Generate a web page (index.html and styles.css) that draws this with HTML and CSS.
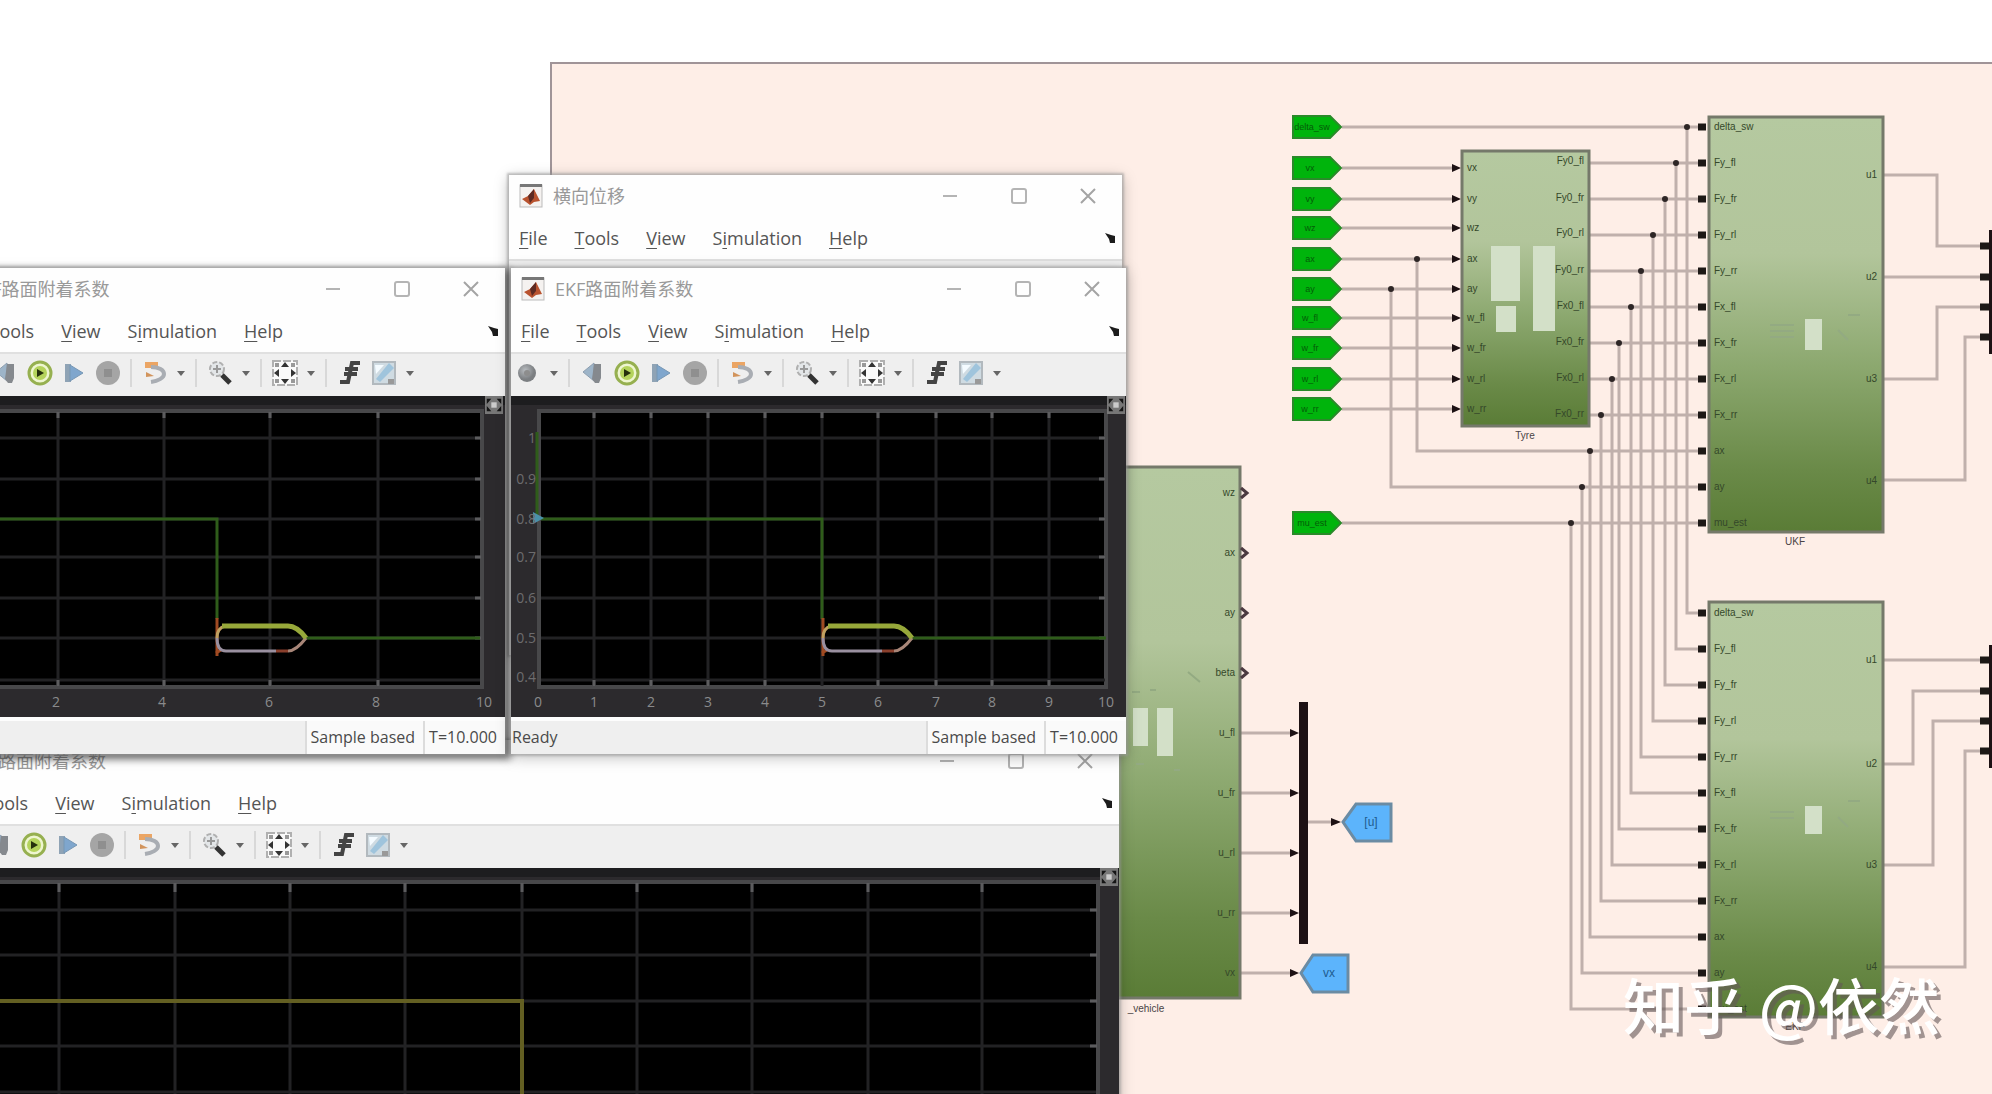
FILE: index.html
```html
<!DOCTYPE html>
<html lang="zh-CN">
<head>
<meta charset="utf-8">
<title>Simulink</title>
<link rel="stylesheet" href="styles.css">
</head>
<body>
<svg class="defs" aria-hidden="true">
  <defs>
    <linearGradient id="block" x1="0" y1="0" x2="0" y2="1">
      <stop offset="0" stop-color="#b5c9a0"/><stop offset=".33" stop-color="#b2c59b"/>
      <stop offset=".6" stop-color="#8ca86f"/><stop offset=".85" stop-color="#6a8a48"/><stop offset="1" stop-color="#5a7c36"/>
    </linearGradient>
    <radialGradient id="ball" cx=".4" cy=".35"><stop offset="0" stop-color="#b8bcc0"/><stop offset="1" stop-color="#7c7f82"/></radialGradient>
    <symbol id="i-gear" viewBox="0 0 26 26"><circle cx="12" cy="13" r="9" fill="url(#ball)"/><circle cx="12" cy="13" r="3" fill="#8d8d8d"/></symbol>
    <symbol id="i-back" viewBox="0 0 26 26"><path d="M3 12l11-9v18z" fill="#9db4c8" stroke="#8e9fb0"/><path d="M14 4h7v14l-2 5h-4l-3-4z" fill="#85898e"/></symbol>
    <symbol id="i-run" viewBox="0 0 26 26"><circle cx="13" cy="13" r="11" fill="#eef6d0" stroke="#96b050" stroke-width="3"/><circle cx="13" cy="13" r="7" fill="#b4d35c"/><path d="M10 9l7 4-7 4z" fill="#25300c"/></symbol>
    <symbol id="i-step" viewBox="0 0 26 26"><path d="M4 4h6v18H4z" fill="#8fa3b5"/><path d="M9 5l13 8-13 8z" fill="#7fa6cd" stroke="#7797b4"/></symbol>
    <symbol id="i-stop" viewBox="0 0 26 26"><circle cx="13" cy="13" r="12" fill="#a5a5a5"/><path d="M9 9h8v8H9z" fill="#8f8f8f"/></symbol>
    <symbol id="i-over" viewBox="0 0 26 26"><path d="M3 2h13v6H3z" fill="#eba564"/><path d="M9 7c8 0 13 3 13 7s-6 7-13 8" fill="none" stroke="#a9adb3" stroke-width="4"/><path d="M4 12l8 4-8 1z" fill="#d2945c"/></symbol>
    <symbol id="i-zoom" viewBox="0 0 26 26"><circle cx="10" cy="9" r="7" fill="#e3e6e8" stroke="#b0b0b0" stroke-width="2" stroke-dasharray="5 2"/><path d="M6 9h8M10 5v8" stroke="#999" stroke-width="2"/><path d="M15 15l8 8" stroke="#333" stroke-width="5"/></symbol>
    <symbol id="i-fit" viewBox="0 0 26 26"><rect x="1" y="1" width="24" height="24" fill="#fafafa" stroke="#b0b0b0" stroke-width="2" stroke-dasharray="8 2"/><path d="M13 2l4 5H9zM13 24l4-5H9zM2 13l5-4v8zM24 13l-5-4v8z" fill="#333"/><path d="M3 3h4v4H3zM19 3h4v4h-4zM3 19h4v4H3zM19 19h4v4h-4z" fill="#999"/></symbol>
    <symbol id="i-sig" viewBox="0 0 26 26"><path d="M23 3h-8l-4 19H3M7 14h13M8 9h13" fill="none" stroke="#444" stroke-width="4"/></symbol>
    <symbol id="i-edit" viewBox="0 0 26 26"><rect x="2" y="2" width="22" height="22" fill="#cfdbe2" stroke="#b2b9be" stroke-width="2"/><path d="M5 19L18 3l5 5L9 22z" fill="#9fc4dc"/><path d="M4 5h9l-8 9z" fill="#f4fbff"/><path d="M17 19h6v5h-6z" fill="#999"/></symbol>
    <symbol id="i-caret" viewBox="0 0 8 8"><path d="M0 2h8L4 7z" fill="#666"/></symbol>
    <symbol id="i-logo" viewBox="0 0 24 24"><rect x="1" y="1" width="22" height="22" fill="#f5f2f0" stroke="#bbb"/><path d="M1 0h22v3H1z" fill="#777"/><path d="M3 15l6-3 6-7 6 12-6 1-4 3z" fill="#b9532f"/><path d="M9 12l6-7v9l-4 5z" fill="#5d2a22"/></symbol>
    <symbol id="i-min" viewBox="0 0 16 16"><path d="M1 8h14" stroke="#b4b4b4" stroke-width="2"/></symbol>
    <symbol id="i-max" viewBox="0 0 16 16"><rect x="1" y="1" width="14" height="14" rx="2" fill="none" stroke="#b4b4b4" stroke-width="2"/></symbol>
    <symbol id="i-close" viewBox="0 0 16 16"><path d="M1 1l14 14M15 1L1 15" stroke="#a4a4a4" stroke-width="2"/></symbol>
    <symbol id="i-dock" viewBox="0 0 10 10"><path d="M0 0l6 2 4 1v7H5L4 6z" fill="#1c1c1c"/></symbol>
    <symbol id="i-expand" viewBox="0 0 20 20"><rect width="20" height="20" fill="#777"/><path d="M2 3h5L2 9zM18 3h-5l5 6zM2 17h5l-5-6zM18 17h-5l5-6z" fill="#151515"/><path d="M7 7h6v6H7z" fill="#ccc"/></symbol>
    <path id="tag" d="M0-11h37l11 11-11 11H0z"/>
    <g id="loop">
      <path d="M1-20v38" stroke="#a04a22" stroke-width="3"/>
      <path d="M0 15l5-3" stroke="#a04a22" stroke-width="3"/>
      <path d="M1 0q0 13 9 13h50" stroke="#9a90a0" stroke-width="3"/>
      <path d="M60 13h12" stroke="#8a3f2c" stroke-width="3"/><path d="M72 13q8 0 18-13" stroke="#a88678" stroke-width="3"/>
      <path d="M1 0q0-10 8-12" stroke="#c0a060" stroke-width="3"/>
      <path d="M6-12h66q9 0 18 12" stroke="#97a83a" stroke-width="5"/>
    </g>
  </defs>
</svg>

<main class="desktop">
<svg class="model" role="img" aria-label="Simulink model">
  <svg x="550" y="62" width="100%" height="100%"><rect class="area" x="1" y="1" width="100%" height="100%"/></svg>

  <g class="wire">
    <path d="M1342 127H1700M1342 168h110M1342 199h110M1342 228h110M1342 259h110M1342 289h110M1342 318h110M1342 348h110M1342 379h110M1342 409h110"/>
    <path d="M1590 163h110M1590 199h110M1590 235h110M1590 271h110M1590 307h110M1590 343h110M1590 379h110M1590 415h110"/>
    <path d="M1417 259V451H1700M1391 289V487H1700M1342 523H1700"/>
    <path d="M1687 127V613h12M1676 163V649h23M1665 199V685h34M1653 235V721h46M1641 271V757h58M1631 307V793h68M1619 343V829h80M1612 379V865h87M1601 415V901h98M1590 451V937h109M1582 487V973h117M1571 523V1009h128"/>
    <path d="M1883 175h54v71h48M1883 277h102M1883 379h54v-72h48M1883 480h82V337h20"/>
    <path d="M1883 660h102M1883 764h30v-73h72M1883 865h50V721h52M1883 967h82V751h20"/>
    <path d="M1240 733h50M1240 793h50M1240 853h50M1240 913h50M1240 973h50M1308 822h24"/>
  </g>

  <path class="port" d="M1698 127h8m-8 36h8m-8 36h8m-8 36h8m-8 36h8m-8 36h8m-8 36h8m-8 36h8m-8 36h8m-8 36h8m-8 36h8m-8 36h8M1698 613h8m-8 36h8m-8 36h8m-8 36h8m-8 36h8m-8 36h8m-8 36h8m-8 36h8m-8 36h8m-8 36h8m-8 36h8m-8 36h8M1980 246h9M1980 277h9M1980 307h9M1980 337h9M1980 660h9M1980 691h9M1980 721h9M1980 751h9"/>
  <path class="head" d="M1452 164l9 4-9 4zM1452 195l9 4-9 4zM1452 224l9 4-9 4zM1452 255l9 4-9 4zM1452 285l9 4-9 4zM1452 314l9 4-9 4zM1452 344l9 4-9 4zM1452 375l9 4-9 4zM1452 405l9 4-9 4zM1290 729l9 4-9 4zM1290 789l9 4-9 4zM1290 849l9 4-9 4zM1290 909l9 4-9 4zM1290 969l9 4-9 4zM1331 818l10 4-10 4z"/>
  <path class="dot" d="M1687 127h0M1676 163h0M1665 199h0M1653 235h0M1641 271h0M1631 307h0M1619 343h0M1612 379h0M1601 415h0M1590 451h0M1582 487h0M1571 523h0M1417 259h0M1391 289h0"/>
  <path class="head" d="M1299 702h9v242h-9zM1989 230h12v124h-12zM1989 645h12v123h-12z"/>

  <g class="from">
    <use href="#tag" x="1293" y="127"/><use href="#tag" x="1293" y="168"/><use href="#tag" x="1293" y="199"/><use href="#tag" x="1293" y="228"/><use href="#tag" x="1293" y="259"/><use href="#tag" x="1293" y="289"/><use href="#tag" x="1293" y="318"/><use href="#tag" x="1293" y="348"/><use href="#tag" x="1293" y="379"/><use href="#tag" x="1293" y="409"/><use href="#tag" x="1293" y="523"/>
  </g>
  <g class="tagname">
    <text x="1312" y="130">delta_sw</text><text x="1310" y="171">vx</text><text x="1310" y="202">vy</text><text x="1310" y="231">wz</text><text x="1310" y="262">ax</text><text x="1310" y="292">ay</text><text x="1310" y="321">w_fl</text><text x="1310" y="351">w_fr</text><text x="1310" y="382">w_rl</text><text x="1310" y="412">w_rr</text><text x="1312" y="526">mu_est</text>
  </g>

  <g class="block">
    <rect x="1462" y="151" width="127" height="275"/><rect x="1709" y="117" width="174" height="415"/><rect x="1709" y="602" width="174" height="415"/><rect x="1000" y="467" width="240" height="531"/>
  </g>
  <g class="art">
    <path d="M1491 246h29v55h-29zM1496 306h20v26h-20zM1533 246h22v85h-22zM1805 319h17v31h-17zM1805 806h17v28h-17zM1133 708h15v38h-15zM1157 708h16v48h-16z"/>
    <path class="faint" d="M1770 325h24M1770 331h24M1770 337h24M1838 330l10 10M1848 315h12M1770 812h24M1770 818h24M1838 817l10 10M1848 801h12M1132 692h8M1150 690h6M1188 672l12 10M1136 764h8M1174 770h6"/>
  </g>
  <g class="in">
    <text x="1467" y="171">vx</text><text x="1467" y="202">vy</text><text x="1467" y="231">wz</text><text x="1467" y="262">ax</text><text x="1467" y="292">ay</text><text x="1467" y="321">w_fl</text><text x="1467" y="351">w_fr</text><text x="1467" y="382">w_rl</text><text x="1467" y="412">w_rr</text>
    <text x="1714" y="130">delta_sw</text><text x="1714" y="166">Fy_fl</text><text x="1714" y="202">Fy_fr</text><text x="1714" y="238">Fy_rl</text><text x="1714" y="274">Fy_rr</text><text x="1714" y="310">Fx_fl</text><text x="1714" y="346">Fx_fr</text><text x="1714" y="382">Fx_rl</text><text x="1714" y="418">Fx_rr</text><text x="1714" y="454">ax</text><text x="1714" y="490">ay</text><text x="1714" y="526">mu_est</text>
    <text x="1714" y="616">delta_sw</text><text x="1714" y="652">Fy_fl</text><text x="1714" y="688">Fy_fr</text><text x="1714" y="724">Fy_rl</text><text x="1714" y="760">Fy_rr</text><text x="1714" y="796">Fx_fl</text><text x="1714" y="832">Fx_fr</text><text x="1714" y="868">Fx_rl</text><text x="1714" y="904">Fx_rr</text><text x="1714" y="940">ax</text><text x="1714" y="976">ay</text><text x="1714" y="1012">mu_est</text>
  </g>
  <g class="out">
    <text x="1584" y="164">Fy0_fl</text><text x="1584" y="201">Fy0_fr</text><text x="1584" y="236">Fy0_rl</text><text x="1584" y="273">Fy0_rr</text><text x="1584" y="309">Fx0_fl</text><text x="1584" y="345">Fx0_fr</text><text x="1584" y="381">Fx0_rl</text><text x="1584" y="417">Fx0_rr</text>
    <text x="1877" y="178">u1</text><text x="1877" y="280">u2</text><text x="1877" y="382">u3</text><text x="1877" y="484">u4</text>
    <text x="1877" y="663">u1</text><text x="1877" y="767">u2</text><text x="1877" y="868">u3</text><text x="1877" y="970">u4</text>
    <text x="1235" y="496">wz</text><text x="1235" y="556">ax</text><text x="1235" y="616">ay</text><text x="1235" y="676">beta</text><text x="1235" y="736">u_fl</text><text x="1235" y="796">u_fr</text><text x="1235" y="856">u_rl</text><text x="1235" y="916">u_rr</text><text x="1235" y="976">vx</text>
  </g>
  <path class="chev" d="M1241 488l6 5-6 5M1241 548l6 5-6 5M1241 608l6 5-6 5M1241 668l6 5-6 5"/>
  <g class="caption"><text x="1525" y="439">Tyre</text><text x="1795" y="545">UKF</text><text x="1795" y="1030">EKF</text><text x="1146" y="1012">_vehicle</text></g>
  <path class="goto" d="M1343 822l13-18h35v37h-35zM1301 973l12-18h35v37h-35z"/>
  <g class="gotoname"><text x="1371" y="826">[u]</text><text x="1329" y="977">vx</text></g>
</svg>

<section class="window w-lower">
  <header class="titlebar"><svg class="logo"><use href="#i-logo"/></svg><h2>实际路面附着系数</h2><button aria-label="Minimize"><svg><use href="#i-min"/></svg></button><button aria-label="Maximize"><svg><use href="#i-max"/></svg></button><button aria-label="Close"><svg><use href="#i-close"/></svg></button></header>
  <nav class="menubar"><button><u>F</u>ile</button><button><u>T</u>ools</button><button><u>V</u>iew</button><button>S<u>i</u>mulation</button><button><u>H</u>elp</button><svg class="dock"><use href="#i-dock"/></svg></nav>
  <div class="toolbar"><button aria-label="Settings"><svg><use href="#i-gear"/></svg></button><button class="caret" aria-label="More"><svg><use href="#i-caret"/></svg></button><i></i><button aria-label="Step back"><svg><use href="#i-back"/></svg></button><button aria-label="Run"><svg><use href="#i-run"/></svg></button><button aria-label="Step forward"><svg><use href="#i-step"/></svg></button><button aria-label="Stop"><svg><use href="#i-stop"/></svg></button><i></i><button aria-label="Highlight block"><svg><use href="#i-over"/></svg></button><button class="caret" aria-label="More"><svg><use href="#i-caret"/></svg></button><i></i><button aria-label="Zoom"><svg><use href="#i-zoom"/></svg></button><button class="caret" aria-label="More"><svg><use href="#i-caret"/></svg></button><i></i><button aria-label="Fit"><svg><use href="#i-fit"/></svg></button><button class="caret" aria-label="More"><svg><use href="#i-caret"/></svg></button><i></i><button aria-label="Triggers"><svg><use href="#i-sig"/></svg></button><button aria-label="Measure"><svg><use href="#i-edit"/></svg></button><button class="caret" aria-label="More"><svg><use href="#i-caret"/></svg></button></div>
  <svg class="plot" role="img" aria-label="Scope plot">
    <rect class="edge" width="100%" height="9"/><rect class="axes" x="26" y="14" width="1154" height="420"/>
    <path class="grid" d="M141 16v360M257 16v360M372 16v360M487 16v360M604 16v360M719 16v360M834 16v360M950 16v360M1064 16v360M28 42h1150M28 87h1150M28 133h1150M28 178h1150M28 224h1150"/>
    <path class="tick" d="M141 15v9M257 15v9M372 15v9M487 15v9M604 15v9M719 15v9M834 15v9M950 15v9M1064 15v9M1172 42h7M1172 87h7M1172 133h7M1172 178h7"/>
    <path class="yellow" d="M28 133h576v290"/>
    <svg x="1181" y="0" width="20" height="18"><use href="#i-expand"/></svg>
  </svg>
</section>

<section class="window w-top">
  <header class="titlebar"><svg class="logo"><use href="#i-logo"/></svg><h2>横向位移</h2><button aria-label="Minimize"><svg><use href="#i-min"/></svg></button><button aria-label="Maximize"><svg><use href="#i-max"/></svg></button><button aria-label="Close"><svg><use href="#i-close"/></svg></button></header>
  <nav class="menubar"><button><u>F</u>ile</button><button><u>T</u>ools</button><button><u>V</u>iew</button><button>S<u>i</u>mulation</button><button><u>H</u>elp</button><svg class="dock"><use href="#i-dock"/></svg></nav>
  <div class="toolbar"></div>
</section>

<section class="window w-left">
  <header class="titlebar"><svg class="logo"><use href="#i-logo"/></svg><h2>UKF路面附着系数</h2><button aria-label="Minimize"><svg><use href="#i-min"/></svg></button><button aria-label="Maximize"><svg><use href="#i-max"/></svg></button><button aria-label="Close"><svg><use href="#i-close"/></svg></button></header>
  <nav class="menubar"><button><u>F</u>ile</button><button><u>T</u>ools</button><button><u>V</u>iew</button><button>S<u>i</u>mulation</button><button><u>H</u>elp</button><svg class="dock"><use href="#i-dock"/></svg></nav>
  <div class="toolbar"><button aria-label="Settings"><svg><use href="#i-gear"/></svg></button><button class="caret" aria-label="More"><svg><use href="#i-caret"/></svg></button><i></i><button aria-label="Step back"><svg><use href="#i-back"/></svg></button><button aria-label="Run"><svg><use href="#i-run"/></svg></button><button aria-label="Step forward"><svg><use href="#i-step"/></svg></button><button aria-label="Stop"><svg><use href="#i-stop"/></svg></button><i></i><button aria-label="Highlight block"><svg><use href="#i-over"/></svg></button><button class="caret" aria-label="More"><svg><use href="#i-caret"/></svg></button><i></i><button aria-label="Zoom"><svg><use href="#i-zoom"/></svg></button><button class="caret" aria-label="More"><svg><use href="#i-caret"/></svg></button><i></i><button aria-label="Fit"><svg><use href="#i-fit"/></svg></button><button class="caret" aria-label="More"><svg><use href="#i-caret"/></svg></button><i></i><button aria-label="Triggers"><svg><use href="#i-sig"/></svg></button><button aria-label="Measure"><svg><use href="#i-edit"/></svg></button><button class="caret" aria-label="More"><svg><use href="#i-caret"/></svg></button></div>
  <svg class="plot" role="img" aria-label="Scope plot">
    <rect class="edge" width="100%" height="9"/><rect class="axes" x="28" y="15" width="530" height="276"/>
    <path class="grid" d="M134 17v273M240 17v273M346 17v273M454 17v273M30 42h526M30 83h526M30 123h526M30 161h526M30 202h526M30 242h526M30 284h526"/>
    <path class="tick" d="M134 16v6M240 16v6M346 16v6M454 16v6M134 284v6M240 284v6M346 284v6M454 284v6M551 42h6M551 83h6M551 123h6M551 161h6M551 202h6M551 242h6"/>
    <path class="green" d="M30 123h263v100M381 242h175"/>
    <use class="loop" href="#loop" x="292" y="242"/>
    <g class="xlabel"><text x="132" y="311">2</text><text x="238" y="311">4</text><text x="345" y="311">6</text><text x="452" y="311">8</text><text x="560" y="311">10</text></g>
    <svg x="560" y="0" width="20" height="18"><use href="#i-expand"/></svg>
  </svg>
  <footer class="status"><span class="grow">Ready</span><span>Sample based</span><span>T=10.000</span></footer>
</section>

<section class="window w-main">
  <header class="titlebar"><svg class="logo"><use href="#i-logo"/></svg><h2>EKF路面附着系数</h2><button aria-label="Minimize"><svg><use href="#i-min"/></svg></button><button aria-label="Maximize"><svg><use href="#i-max"/></svg></button><button aria-label="Close"><svg><use href="#i-close"/></svg></button></header>
  <nav class="menubar"><button><u>F</u>ile</button><button><u>T</u>ools</button><button><u>V</u>iew</button><button>S<u>i</u>mulation</button><button><u>H</u>elp</button><svg class="dock"><use href="#i-dock"/></svg></nav>
  <div class="toolbar"><button aria-label="Settings"><svg><use href="#i-gear"/></svg></button><button class="caret" aria-label="More"><svg><use href="#i-caret"/></svg></button><i></i><button aria-label="Step back"><svg><use href="#i-back"/></svg></button><button aria-label="Run"><svg><use href="#i-run"/></svg></button><button aria-label="Step forward"><svg><use href="#i-step"/></svg></button><button aria-label="Stop"><svg><use href="#i-stop"/></svg></button><i></i><button aria-label="Highlight block"><svg><use href="#i-over"/></svg></button><button class="caret" aria-label="More"><svg><use href="#i-caret"/></svg></button><i></i><button aria-label="Zoom"><svg><use href="#i-zoom"/></svg></button><button class="caret" aria-label="More"><svg><use href="#i-caret"/></svg></button><i></i><button aria-label="Fit"><svg><use href="#i-fit"/></svg></button><button class="caret" aria-label="More"><svg><use href="#i-caret"/></svg></button><i></i><button aria-label="Triggers"><svg><use href="#i-sig"/></svg></button><button aria-label="Measure"><svg><use href="#i-edit"/></svg></button><button class="caret" aria-label="More"><svg><use href="#i-caret"/></svg></button></div>
  <svg class="plot" role="img" aria-label="Scope plot">
    <rect class="edge" width="100%" height="9"/><rect class="axes" x="28" y="15" width="567" height="276"/>
    <path class="grid" d="M83 17v273M140 17v273M197 17v273M254 17v273M311 17v273M367 17v273M425 17v273M481 17v273M538 17v273M30 42h564M30 83h564M30 123h564M30 161h564M30 202h564M30 242h564M30 284h564"/>
    <path class="tick" d="M83 16v6M140 16v6M197 16v6M254 16v6M311 16v6M367 16v6M425 16v6M481 16v6M538 16v6M83 284v6M140 284v6M197 284v6M254 284v6M367 284v6M425 284v6M481 284v6M538 284v6M588 42h6M588 83h6M588 123h6M588 161h6M588 202h6M588 242h6"/>
    <path class="green" d="M26 36v84M30 123h281v100M401 242h194"/>
    <path d="M22 116l11 6-11 6z" fill="#4a90a8"/>
    <use class="loop" href="#loop" x="311" y="242"/>
    <g class="xlabel"><text x="27" y="311">0</text><text x="83" y="311">1</text><text x="140" y="311">2</text><text x="197" y="311">3</text><text x="254" y="311">4</text><text x="311" y="311">5</text><text x="367" y="311">6</text><text x="425" y="311">7</text><text x="481" y="311">8</text><text x="538" y="311">9</text><text x="595" y="311">10</text></g>
    <g class="ylabel"><text x="25" y="47">1</text><text x="25" y="88">0.9</text><text x="25" y="128">0.8</text><text x="25" y="166">0.7</text><text x="25" y="207">0.6</text><text x="25" y="247">0.5</text><text x="25" y="286">0.4</text></g>
    <svg x="595" y="0" width="20" height="18"><use href="#i-expand"/></svg>
  </svg>
  <footer class="status"><span class="grow">Ready</span><span>Sample based</span><span>T=10.000</span></footer>
</section>

<p class="watermark">知乎 @依然</p>
</main>
</body>
</html>
```
FILE: styles.css
```css
* { box-sizing: border-box; }
body { margin: 0; background: #fff; font-family: "Open Sans", "Noto Sans CJK SC", sans-serif; }
.defs { position: absolute; width: 0; height: 0; }
.desktop { position: relative; width: 100%; height: 100vh; overflow: hidden; }
.model { display: block; width: 100%; height: 100%; font-family: "Liberation Sans", Arial, sans-serif; font-size: 10px; }

.area { fill: #feeee7; stroke: #a09498; stroke-width: 2; }
.wire { fill: none; stroke: #c0b0ac; stroke-width: 3; }
.port { stroke: #1d1816; stroke-width: 7; }
.head { fill: #1d1114; }
.dot { stroke: #2e2626; stroke-width: 6; stroke-linecap: round; }
.from { fill: #00b40c; stroke: #2a8a2a; stroke-width: 2; }
.tagname { fill: #045c08; text-anchor: middle; font-size: 9px; }
.block { fill: url(#block); stroke: #75796a; stroke-width: 3; }
.art { fill: #d3e0c8; }
.art .faint { fill: none; stroke: #93aa82; stroke-width: 2; }
.in { fill: #35482a; }
.out { fill: #35482a; text-anchor: end; }
.chev { fill: none; stroke: #4c3a40; stroke-width: 3; }
.caption { fill: #4a4446; text-anchor: middle; }
.goto { fill: #5cb4fc; stroke: #6b8ba3; stroke-width: 3; }
.gotoname { fill: #1f5c90; text-anchor: middle; font-size: 12px; }

.window { position: absolute; display: flex; flex-direction: column; background: #fefefe; box-shadow: 0 0 2px 2px #9999, 0 3px 14px #0004; }
.w-main { left: 511px; top: 268px; width: 615px; height: 486px; }
.w-left { left: -76px; top: 268px; width: 581px; height: 486px; box-shadow: 0 0 2px 2px #9999, 4px 3px 8px 2px #0009; }
.w-top { left: 509px; top: 175px; width: 613px; height: 480px; }
.w-lower { left: -82px; top: 740px; width: 1201px; height: 480px; }

.window button { display: flex; align-items: center; justify-content: center; padding: 0; border: 0; background: none; font: inherit; color: inherit; }
.titlebar { display: flex; flex: none; height: 42px; align-items: stretch; color: #999; }
.titlebar h2 { flex: 1; margin: 0; padding-left: 10px; font-size: 18px; line-height: 42px; font-weight: 400; white-space: nowrap; }
.titlebar .logo { width: 24px; height: 24px; margin: 9px 0 0 10px; }
.titlebar button { width: 69px; }
.titlebar button svg { width: 16px; height: 16px; }
.menubar { display: flex; flex: none; height: 42px; padding: 0 7px 0 10px; gap: 27px; align-items: center; font-size: 18px; color: #555; }
.menubar u { text-underline-offset: 3px; }
.dock { width: 10px; height: 10px; margin-left: auto; }
.toolbar { display: flex; flex: none; height: 44px; padding-bottom: 4px; align-items: center; background: #efefef; border-top: 2px solid #e0e0e0; }
.toolbar button { width: 34px; height: 34px; }
.toolbar button svg { width: 26px; height: 26px; }
.toolbar .caret { width: 18px; }
.toolbar .caret svg { width: 8px; height: 8px; }
.toolbar i { width: 2px; height: 28px; margin: 0 6px 0 5px; background: #d8d8d8; }

.plot { flex: 1; width: 100%; min-height: 0; background: #2c2a2d; font-size: 14px; }
.edge { fill: #1d1d1f; }
.axes { fill: #000; stroke: #48484a; stroke-width: 4; }
.grid { stroke: #222224; stroke-width: 3; }
.tick { stroke: #5c5c5e; stroke-width: 3; }
.green { fill: none; stroke: #2f5c1a; stroke-width: 3; }
.yellow { fill: none; stroke: #635f22; stroke-width: 4; }
.loop { fill: none; }
.xlabel { fill: #8a8a8c; text-anchor: middle; }
.ylabel { fill: #6c6c6e; text-anchor: end; }

.status { display: flex; flex: none; height: 37px; border-top: 4px solid #fdfdfd; background: #efefef; color: #4a4a4a; font-size: 16px; line-height: 33px; }
.status span { padding: 0 8px 0 4px; border-left: 2px solid #dcdcdc; background: #fafafa; }
.status .grow { flex: 1; padding: 0 1px; border: 0; background: none; }

.watermark { position: absolute; right: 52px; bottom: 45px; margin: 0; font-family: "Noto Sans CJK SC", sans-serif; font-size: 61px; font-weight: 500; line-height: 90px; color: #fff; text-shadow: 4px 4px 0 #6457579a; white-space: nowrap; }
```
